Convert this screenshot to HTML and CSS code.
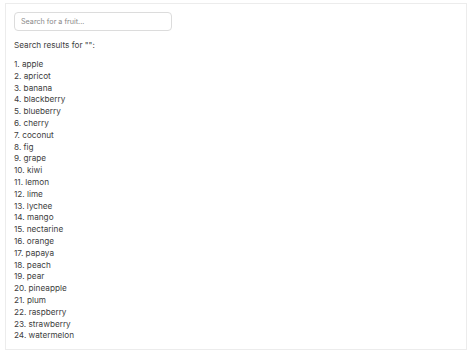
FILE: index.html
```html
<!DOCTYPE html>
<html>
<head>
<meta charset="utf-8">
<link rel="stylesheet" href="styles.css">
</head>
<body>
<div class="panel">
  <input class="search" type="text" placeholder="Search for a fruit...">
  <p class="label">Search results for "":</p>
  <ol class="results">
    <li>1. apple</li>
    <li>2. apricot</li>
    <li>3. banana</li>
    <li>4. blackberry</li>
    <li>5. blueberry</li>
    <li>6. cherry</li>
    <li>7. coconut</li>
    <li>8. fig</li>
    <li>9. grape</li>
    <li>10. kiwi</li>
    <li>11. lemon</li>
    <li>12. lime</li>
    <li>13. lychee</li>
    <li>14. mango</li>
    <li>15. nectarine</li>
    <li>16. orange</li>
    <li>17. papaya</li>
    <li>18. peach</li>
    <li>19. pear</li>
    <li>20. pineapple</li>
    <li>21. plum</li>
    <li>22. raspberry</li>
    <li>23. strawberry</li>
    <li>24. watermelon</li>
  </ol>
</div>
</body>
</html>
```
FILE: styles.css
```css
html, body {
  margin: 0;
  padding: 0;
  background: #fff;
}
body {
  font-family: Inter, "Noto Sans", sans-serif;
  color: #404040;
  font-size: 8.2px;
}
.panel {
  box-sizing: border-box;
  margin: 3px 0 0 5px;
  width: 462px;
  height: 347px;
  border: 1px solid #ececec;
  padding: 8px;
}
.search {
  display: block;
  box-sizing: border-box;
  width: 158px;
  height: 19px;
  border: 1px solid #dcdcdc;
  border-radius: 4px;
  padding: 0 6px;
  font-family: Inter, sans-serif;
  font-size: 7.2px;
  color: #333;
  outline: none;
}
.search::placeholder {
  color: #888;
}
.label {
  margin: 8px 0 8px;
  line-height: 12px;
}
.results {
  list-style: none;
  margin: 0;
  padding: 0;
}
.results li {
  line-height: 11.8px;
}
```
